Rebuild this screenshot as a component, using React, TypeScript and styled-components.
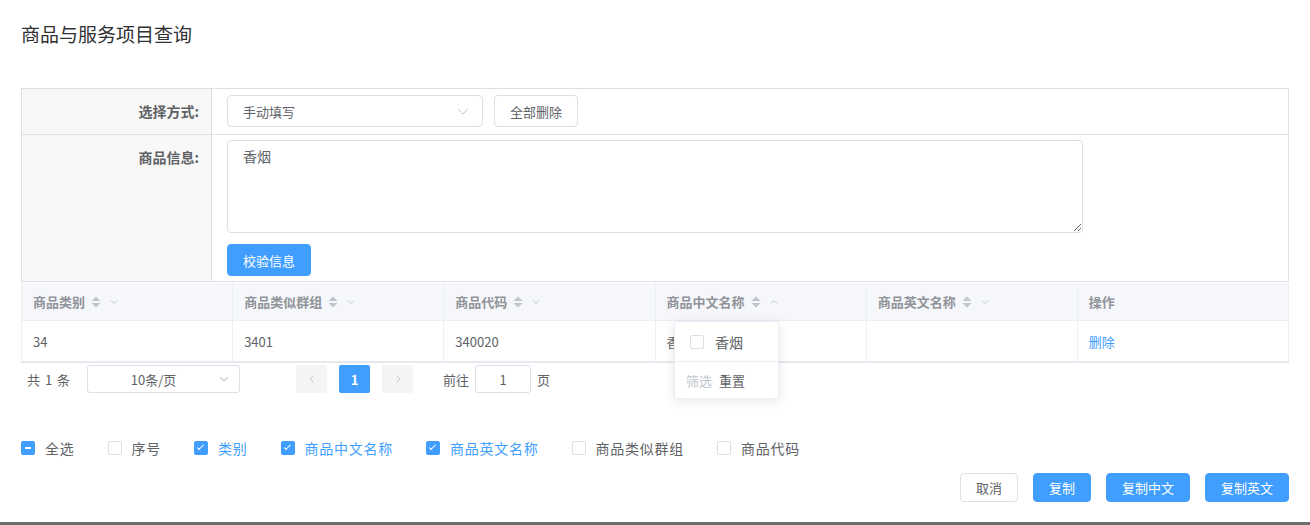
import styled, { createGlobalStyle } from "styled-components"

const GlobalStyle = createGlobalStyle`
  html, body {
    margin: 0;
    padding: 0;
    background: #fff;
  }
  body {
    font-family: "Noto Sans CJK SC", "Noto Sans", sans-serif;
    color: #606266;
  }
  * {
    box-sizing: border-box;
  }
`

const columns = [
  { title: "商品类别", value: "34", sort: true, open: false },
  { title: "商品类似群组", value: "3401", sort: true, open: false },
  { title: "商品代码", value: "340020", sort: true, open: false },
  { title: "商品中文名称", value: "香烟", sort: true, open: true },
  { title: "商品英文名称", value: "", sort: true, open: false },
  { title: "操作", value: "删除", sort: false, open: false, link: true },
]

const fields = [
  { label: "全选", state: "half" },
  { label: "序号", state: "off" },
  { label: "类别", state: "on" },
  { label: "商品中文名称", state: "on" },
  { label: "商品英文名称", state: "on" },
  { label: "商品类似群组", state: "off" },
  { label: "商品代码", state: "off" },
]

function Chevron({ up = false, size = 8 }) {
  return (
    <svg width={size} height={size} viewBox="0 0 8 8">
      <path d={up ? "M1 5.5 L4 2.5 L7 5.5" : "M1 2.5 L4 5.5 L7 2.5"} fill="none" stroke="#c0c4cc" strokeWidth="1" />
    </svg>
  )
}

function SortCaret() {
  return (
    <svg width="10" height="14" viewBox="0 0 10 14">
      <polygon points="0.5,6 5,1.5 9.5,6" fill="#c0c4cc" />
      <polygon points="0.5,8 5,12.5 9.5,8" fill="#c0c4cc" />
    </svg>
  )
}

function PagerArrow({ dir }: { dir: "left" | "right" }) {
  return (
    <svg width="10" height="10" viewBox="0 0 10 10">
      <path d={dir === "left" ? "M6.5 1.5 L3 5 L6.5 8.5" : "M3.5 1.5 L7 5 L3.5 8.5"} fill="none" stroke="#c0c4cc" strokeWidth="1" />
    </svg>
  )
}

function Checkbox({ state = "off" }: { state?: string }) {
  return (
    <Box $state={state}>
      {state === "on" && <Tick />}
      {state === "half" && <Dash />}
    </Box>
  )
}

export default function App() {
  return (
    <>
      <GlobalStyle />
      <Dialog>
        <Title>商品与服务项目查询</Title>

        <FormTable>
          <FormRow>
            <FormLabel>选择方式:</FormLabel>
            <FormCell $pad="6px 15px 7px">
              <Select>
                <span>手动填写</span>
                <svg width="14" height="14" viewBox="0 0 14 14">
                  <path d="M2 5 L7 10 L12 5" fill="none" stroke="#c0c4cc" strokeWidth="1" />
                </svg>
              </Select>
              <PlainButton $height={32}>全部删除</PlainButton>
            </FormCell>
          </FormRow>
          <FormRow>
            <FormLabel>商品信息:</FormLabel>
            <FormCell $pad="5px 15px" $column>
              <TextArea defaultValue="香烟" />
              <PrimaryButton $height={32}>校验信息</PrimaryButton>
            </FormCell>
          </FormRow>
        </FormTable>

        <Table>
          <HeaderRow>
            {columns.map(col => (
              <HeaderCell key={col.title}>
                <span>{col.title}</span>
                {col.sort && (
                  <SortTools>
                    <SortCaret />
                    <Chevron up={col.open} />
                  </SortTools>
                )}
              </HeaderCell>
            ))}
          </HeaderRow>
          <BodyRow>
            {columns.map(col => (
              <BodyCell key={col.title} $link={col.link}>{col.value}</BodyCell>
            ))}
          </BodyRow>

          <FilterPopup>
            <FilterOption>
              <Checkbox />
              <span>香烟</span>
            </FilterOption>
            <FilterActions>
              <FilterAction $disabled>筛选</FilterAction>
              <FilterAction>重置</FilterAction>
            </FilterActions>
          </FilterPopup>
        </Table>

        <Pagination>
          <Total>共 1 条</Total>
          <SizeSelect>
            <span>10条/页</span>
            <SizeArrow>
              <Chevron size={10} />
            </SizeArrow>
          </SizeSelect>
          <Pager>
            <PageButton><PagerArrow dir="left" /></PageButton>
            <PageButton $active>1</PageButton>
            <PageButton><PagerArrow dir="right" /></PageButton>
          </Pager>
          <Jumper>
            <span>前往</span>
            <JumpInput>1</JumpInput>
            <span>页</span>
          </Jumper>
        </Pagination>

        <FieldRow>
          {fields.map(field => (
            <Field key={field.label} $checked={field.state === "on"}>
              <Checkbox state={field.state} />
              <span>{field.label}</span>
            </Field>
          ))}
        </FieldRow>

        <Footer>
          <PlainButton $height={29}>取消</PlainButton>
          <PrimaryButton $height={29}>复制</PrimaryButton>
          <PrimaryButton $height={29}>复制中文</PrimaryButton>
          <PrimaryButton $height={29}>复制英文</PrimaryButton>
        </Footer>
      </Dialog>
    </>
  )
}

const Dialog = styled.div`
  width: 1310px;
  height: 525px;
  padding: 0 21px;
  background: #fff;
  border-bottom: 3px solid #6e6e6e;
  display: flex;
  flex-direction: column;
`

const Title = styled.div`
  height: 88px;
  padding-top: 22px;
  font-size: 19px;
  line-height: 24px;
  color: #303133;
`

const FormTable = styled.div`
  border: 1px solid #dcdfe6;
`

const FormRow = styled.div`
  display: flex;
  & + & {
    border-top: 1px solid #dcdfe6;
  }
`

const FormLabel = styled.div`
  width: 190px;
  flex-shrink: 0;
  padding: 12px 12px 0 0;
  background: #f8f8f8;
  border-right: 1px solid #dcdfe6;
  text-align: right;
  font-size: 14px;
  line-height: 20px;
  font-weight: bold;
  color: #606266;
`

const FormCell = styled.div<{ $pad: string; $column?: boolean }>`
  flex: 1;
  display: flex;
  flex-direction: ${p => (p.$column ? "column" : "row")};
  align-items: flex-start;
  padding: ${p => p.$pad};
`

const Select = styled.div`
  width: 256px;
  height: 32px;
  padding: 0 12px 0 15px;
  border: 1px solid #dcdfe6;
  border-radius: 4px;
  display: flex;
  align-items: center;
  justify-content: space-between;
  font-size: 13px;
  color: #606266;
`

const buttonBase = `
  padding: 0 15px;
  border-radius: 4px;
  font-size: 13px;
  font-family: inherit;
  display: inline-flex;
  align-items: center;
  justify-content: center;
  cursor: pointer;
`

const PlainButton = styled.button<{ $height: number }>`
  ${buttonBase}
  height: ${p => p.$height}px;
  margin-left: 11px;
  background: #fff;
  border: 1px solid #dcdfe6;
  color: #606266;
`

const PrimaryButton = styled.button<{ $height: number }>`
  ${buttonBase}
  height: ${p => p.$height}px;
  background: #409eff;
  border: 1px solid #409eff;
  color: #fff;
`

const TextArea = styled.textarea`
  width: 856px;
  height: 93px;
  margin-bottom: 11px;
  padding: 5px 15px;
  border: 1px solid #dcdfe6;
  border-radius: 4px;
  font-family: inherit;
  font-size: 14px;
  line-height: 1.5;
  color: #606266;
  resize: vertical;
  outline: none;
`

const Table = styled.div`
  position: relative;
  margin-top: 1px;
  border-left: 1px solid #ebeef5;
  border-bottom: 2px solid #e6e9ef;
`

const HeaderRow = styled.div`
  display: grid;
  grid-template-columns: repeat(6, 1fr);
  height: 38px;
  background: #f5f7fa;
  border-bottom: 1px solid #ebeef5;
`

const HeaderCell = styled.div`
  display: flex;
  align-items: center;
  gap: 6px;
  padding: 0 11px;
  border-right: 1px solid #ebeef5;
  font-size: 13px;
  font-weight: bold;
  color: #909399;
`

const SortTools = styled.span`
  display: inline-flex;
  align-items: center;
  gap: 9px;
`

const BodyRow = styled.div`
  display: grid;
  grid-template-columns: repeat(6, 1fr);
  height: 40px;
  background: #fff;
`

const BodyCell = styled.div<{ $link?: boolean }>`
  display: flex;
  align-items: center;
  padding: 0 11px;
  border-right: 1px solid #ebeef5;
  font-size: 13px;
  color: ${p => (p.$link ? "#409eff" : "#606266")};
`

const FilterPopup = styled.div`
  position: absolute;
  left: 652px;
  top: 38px;
  width: 105px;
  background: #fff;
  border: 1px solid #ebeef5;
  border-radius: 2px;
  box-shadow: 0 2px 12px 0 rgba(0, 0, 0, 0.1);
  z-index: 2;
`

const FilterOption = styled.div`
  height: 39px;
  display: flex;
  align-items: center;
  gap: 11px;
  padding-left: 15px;
  font-size: 14px;
  color: #606266;
`

const FilterActions = styled.div`
  height: 37px;
  display: flex;
  align-items: center;
  gap: 7px;
  padding-left: 11px;
  border-top: 1px solid #ebeef5;
`

const FilterAction = styled.span<{ $disabled?: boolean }>`
  font-size: 13px;
  color: ${p => (p.$disabled ? "#c0c4cc" : "#606266")};
`

const Pagination = styled.div`
  margin-top: 2px;
  height: 28px;
  display: flex;
  align-items: center;
  padding-left: 6px;
  font-size: 13px;
  color: #606266;
`

const Total = styled.span`
  min-width: 44px;
  margin-right: 16px;
  word-spacing: 2px;
`

const SizeSelect = styled.div`
  position: relative;
  width: 153px;
  height: 28px;
  padding-right: 20px;
  border: 1px solid #dcdfe6;
  border-radius: 3px;
  display: flex;
  align-items: center;
  justify-content: center;
`

const SizeArrow = styled.span`
  position: absolute;
  right: 10px;
  top: 0;
  bottom: 0;
  display: flex;
  align-items: center;
`

const Pager = styled.div`
  display: flex;
  gap: 12px;
  margin-left: 56px;
`

const PageButton = styled.div<{ $active?: boolean }>`
  width: 31px;
  height: 28px;
  border-radius: 2px;
  display: flex;
  align-items: center;
  justify-content: center;
  font-size: 13px;
  font-weight: bold;
  background: ${p => (p.$active ? "#409eff" : "#f4f4f5")};
  color: ${p => (p.$active ? "#fff" : "#c0c4cc")};
`

const Jumper = styled.div`
  display: flex;
  align-items: center;
  gap: 6px;
  margin-left: 30px;
`

const JumpInput = styled.div`
  width: 56px;
  height: 28px;
  border: 1px solid #dcdfe6;
  border-radius: 3px;
  display: flex;
  align-items: center;
  justify-content: center;
`

const FieldRow = styled.div`
  margin-top: 45px;
  height: 20px;
  display: flex;
  align-items: center;
`

const Field = styled.label<{ $checked: boolean }>`
  display: inline-flex;
  align-items: center;
  gap: 10px;
  margin-right: 33px;
  font-size: 14px;
  letter-spacing: 0.75px;
  line-height: 20px;
  color: ${p => (p.$checked ? "#409eff" : "#606266")};
`

const Box = styled.span<{ $state: string }>`
  position: relative;
  width: 14px;
  height: 14px;
  flex-shrink: 0;
  border-radius: 2px;
  border: 1px solid ${p => (p.$state === "off" ? "#dcdfe6" : "#409eff")};
  background: ${p => (p.$state === "off" ? "#fff" : "#409eff")};
`

const Tick = styled.span`
  position: absolute;
  left: 4px;
  top: 1px;
  width: 3px;
  height: 7px;
  border: 1px solid #fff;
  border-left: 0;
  border-top: 0;
  transform: rotate(45deg);
`

const Dash = styled.span`
  position: absolute;
  left: 3px;
  right: 3px;
  top: 5px;
  height: 2px;
  background: #fff;
`

const Footer = styled.div`
  margin-top: 15px;
  display: flex;
  justify-content: flex-end;
  gap: 15px;
  & > button {
    margin-left: 0;
  }
`
